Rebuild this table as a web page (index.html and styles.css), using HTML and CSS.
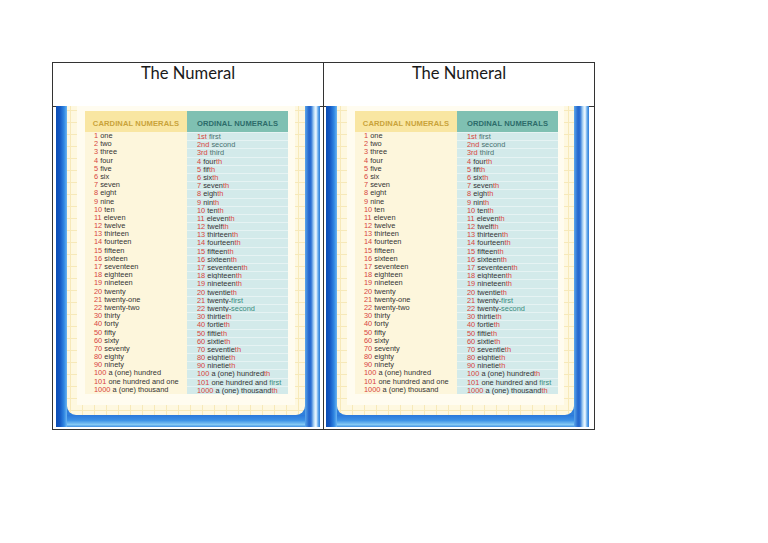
FILE: index.html
```html
<!DOCTYPE html>
<html>
<head>
<meta charset="utf-8">
<link rel="stylesheet" href="styles.css">
</head>
<body>
<div class="page">
  <div class="doc">
    <div class="head first">The Numeral</div>
    <div class="head">The Numeral</div>
    <div class="cell first pad3">
      <div class="pic">
        <div class="panel">
          <div class="card">
            <div class="nums">
              <div class="hc">CARDINAL NUMERALS</div><div class="ho">ORDINAL NUMERALS</div>
              <div class="c"><span class="n">1</span> one</div><div class="o"><span class="n">1st</span> <span class="t2">first</span></div>
              <div class="c"><span class="n">2</span> two</div><div class="o"><span class="n">2nd</span> <span class="t2">second</span></div>
              <div class="c"><span class="n">3</span> three</div><div class="o"><span class="n">3rd</span> <span class="t2">third</span></div>
              <div class="c"><span class="n">4</span> four</div><div class="o"><span class="n">4</span> four<span class="n">th</span></div>
              <div class="c"><span class="n">5</span> five</div><div class="o"><span class="n">5</span> fif<span class="n">th</span></div>
              <div class="c"><span class="n">6</span> six</div><div class="o"><span class="n">6</span> six<span class="n">th</span></div>
              <div class="c"><span class="n">7</span> seven</div><div class="o"><span class="n">7</span> seven<span class="n">th</span></div>
              <div class="c"><span class="n">8</span> eight</div><div class="o"><span class="n">8</span> eigh<span class="n">th</span></div>
              <div class="c"><span class="n">9</span> nine</div><div class="o"><span class="n">9</span> nin<span class="n">th</span></div>
              <div class="c"><span class="n">10</span> ten</div><div class="o"><span class="n">10</span> ten<span class="n">th</span></div>
              <div class="c"><span class="n">11</span> eleven</div><div class="o"><span class="n">11</span> eleven<span class="n">th</span></div>
              <div class="c"><span class="n">12</span> twelve</div><div class="o"><span class="n">12</span> twelf<span class="n">th</span></div>
              <div class="c"><span class="n">13</span> thirteen</div><div class="o"><span class="n">13</span> thirteen<span class="n">th</span></div>
              <div class="c"><span class="n">14</span> fourteen</div><div class="o"><span class="n">14</span> fourteen<span class="n">th</span></div>
              <div class="c"><span class="n">15</span> fifteen</div><div class="o"><span class="n">15</span> fifteen<span class="n">th</span></div>
              <div class="c"><span class="n">16</span> sixteen</div><div class="o"><span class="n">16</span> sixteen<span class="n">th</span></div>
              <div class="c"><span class="n">17</span> seventeen</div><div class="o"><span class="n">17</span> seventeen<span class="n">th</span></div>
              <div class="c"><span class="n">18</span> eighteen</div><div class="o"><span class="n">18</span> eighteen<span class="n">th</span></div>
              <div class="c"><span class="n">19</span> nineteen</div><div class="o"><span class="n">19</span> nineteen<span class="n">th</span></div>
              <div class="c"><span class="n">20</span> twenty</div><div class="o"><span class="n">20</span> twentie<span class="n">th</span></div>
              <div class="c"><span class="n">21</span> twenty-one</div><div class="o"><span class="n">21</span> twenty-<span class="t">first</span></div>
              <div class="c"><span class="n">22</span> twenty-two</div><div class="o"><span class="n">22</span> twenty-<span class="t">second</span></div>
              <div class="c"><span class="n">30</span> thirty</div><div class="o"><span class="n">30</span> thirtie<span class="n">th</span></div>
              <div class="c"><span class="n">40</span> forty</div><div class="o"><span class="n">40</span> fortie<span class="n">th</span></div>
              <div class="c"><span class="n">50</span> fifty</div><div class="o"><span class="n">50</span> fiftie<span class="n">th</span></div>
              <div class="c"><span class="n">60</span> sixty</div><div class="o"><span class="n">60</span> sixtie<span class="n">th</span></div>
              <div class="c"><span class="n">70</span> seventy</div><div class="o"><span class="n">70</span> seventie<span class="n">th</span></div>
              <div class="c"><span class="n">80</span> eighty</div><div class="o"><span class="n">80</span> eightie<span class="n">th</span></div>
              <div class="c"><span class="n">90</span> ninety</div><div class="o"><span class="n">90</span> ninetie<span class="n">th</span></div>
              <div class="c"><span class="n">100</span> a (one) hundred</div><div class="o"><span class="n">100</span> a (one) hundred<span class="n">th</span></div>
              <div class="c"><span class="n">101</span> one hundred and one</div><div class="o"><span class="n">101</span> one hundred and <span class="t">first</span></div>
              <div class="c"><span class="n">1000</span> a (one) thousand</div><div class="o"><span class="n">1000</span> a (one) thousand<span class="n">th</span></div>
            </div>
          </div>
        </div>
      </div>
    </div>
    <div class="cell pad2">
      <div class="pic pic2">
        <div class="panel">
          <div class="card">
            <div class="nums">
              <div class="hc">CARDINAL NUMERALS</div><div class="ho">ORDINAL NUMERALS</div>
              <div class="c"><span class="n">1</span> one</div><div class="o"><span class="n">1st</span> <span class="t2">first</span></div>
              <div class="c"><span class="n">2</span> two</div><div class="o"><span class="n">2nd</span> <span class="t2">second</span></div>
              <div class="c"><span class="n">3</span> three</div><div class="o"><span class="n">3rd</span> <span class="t2">third</span></div>
              <div class="c"><span class="n">4</span> four</div><div class="o"><span class="n">4</span> four<span class="n">th</span></div>
              <div class="c"><span class="n">5</span> five</div><div class="o"><span class="n">5</span> fif<span class="n">th</span></div>
              <div class="c"><span class="n">6</span> six</div><div class="o"><span class="n">6</span> six<span class="n">th</span></div>
              <div class="c"><span class="n">7</span> seven</div><div class="o"><span class="n">7</span> seven<span class="n">th</span></div>
              <div class="c"><span class="n">8</span> eight</div><div class="o"><span class="n">8</span> eigh<span class="n">th</span></div>
              <div class="c"><span class="n">9</span> nine</div><div class="o"><span class="n">9</span> nin<span class="n">th</span></div>
              <div class="c"><span class="n">10</span> ten</div><div class="o"><span class="n">10</span> ten<span class="n">th</span></div>
              <div class="c"><span class="n">11</span> eleven</div><div class="o"><span class="n">11</span> eleven<span class="n">th</span></div>
              <div class="c"><span class="n">12</span> twelve</div><div class="o"><span class="n">12</span> twelf<span class="n">th</span></div>
              <div class="c"><span class="n">13</span> thirteen</div><div class="o"><span class="n">13</span> thirteen<span class="n">th</span></div>
              <div class="c"><span class="n">14</span> fourteen</div><div class="o"><span class="n">14</span> fourteen<span class="n">th</span></div>
              <div class="c"><span class="n">15</span> fifteen</div><div class="o"><span class="n">15</span> fifteen<span class="n">th</span></div>
              <div class="c"><span class="n">16</span> sixteen</div><div class="o"><span class="n">16</span> sixteen<span class="n">th</span></div>
              <div class="c"><span class="n">17</span> seventeen</div><div class="o"><span class="n">17</span> seventeen<span class="n">th</span></div>
              <div class="c"><span class="n">18</span> eighteen</div><div class="o"><span class="n">18</span> eighteen<span class="n">th</span></div>
              <div class="c"><span class="n">19</span> nineteen</div><div class="o"><span class="n">19</span> nineteen<span class="n">th</span></div>
              <div class="c"><span class="n">20</span> twenty</div><div class="o"><span class="n">20</span> twentie<span class="n">th</span></div>
              <div class="c"><span class="n">21</span> twenty-one</div><div class="o"><span class="n">21</span> twenty-<span class="t">first</span></div>
              <div class="c"><span class="n">22</span> twenty-two</div><div class="o"><span class="n">22</span> twenty-<span class="t">second</span></div>
              <div class="c"><span class="n">30</span> thirty</div><div class="o"><span class="n">30</span> thirtie<span class="n">th</span></div>
              <div class="c"><span class="n">40</span> forty</div><div class="o"><span class="n">40</span> fortie<span class="n">th</span></div>
              <div class="c"><span class="n">50</span> fifty</div><div class="o"><span class="n">50</span> fiftie<span class="n">th</span></div>
              <div class="c"><span class="n">60</span> sixty</div><div class="o"><span class="n">60</span> sixtie<span class="n">th</span></div>
              <div class="c"><span class="n">70</span> seventy</div><div class="o"><span class="n">70</span> seventie<span class="n">th</span></div>
              <div class="c"><span class="n">80</span> eighty</div><div class="o"><span class="n">80</span> eightie<span class="n">th</span></div>
              <div class="c"><span class="n">90</span> ninety</div><div class="o"><span class="n">90</span> ninetie<span class="n">th</span></div>
              <div class="c"><span class="n">100</span> a (one) hundred</div><div class="o"><span class="n">100</span> a (one) hundred<span class="n">th</span></div>
              <div class="c"><span class="n">101</span> one hundred and one</div><div class="o"><span class="n">101</span> one hundred and <span class="t">first</span></div>
              <div class="c"><span class="n">1000</span> a (one) thousand</div><div class="o"><span class="n">1000</span> a (one) thousand<span class="n">th</span></div>
            </div>
          </div>
        </div>
      </div>
    </div>
  </div>
</div>
</body>
</html>
```
FILE: styles.css
```css
* { box-sizing: border-box; }
html, body { margin: 0; padding: 0; background: #fff; }
body { width: 768px; height: 543px; overflow: hidden; }

.page { padding: 62px 0 0 52px; }

.doc {
  display: grid;
  grid-template-columns: 271px 270px;
  grid-template-rows: 44px 322px;
  width: 543px;
  border: 1px solid #333;
}

.head {
  border-bottom: 1px solid #333;
  padding-top: 1px;
  font-family: Lato, "Liberation Sans", sans-serif;
  font-size: 16.6px;
  line-height: 19px;
  color: #1a1a1a;
  text-align: center;
}
.first { border-right: 1px solid #333; }

.cell { padding-top: 0; }
.pad3 { padding-left: 3px; }
.pad2 { padding-left: 2px; }

.pic {
  margin-top: -1px;
  width: 264px;
  height: 321px;
  padding: 0 15px 12px 11px;
  background:
    linear-gradient(to right, #0b4db4 0, #1459c4 4px, #2f86e2 8px, #6cb6f2 11px) left top / 11px 100% no-repeat,
    linear-gradient(to right, #5aa6ea 0, #2466cc 4px, #2a70d4 6px, #b6dcf6 9px, #f4faff 11px, #68aeec 13px, #2c7ad8 15px) right top / 15px 100% no-repeat,
    linear-gradient(to bottom, #2a78da 0, #3d92e6 45%, #86caf4 80%, #3e8ee2 100%) left bottom / 100% 12px no-repeat,
    #2f7fdc;
}
.pic2 { width: 263px; }

.panel {
  height: 309px;
  padding: 0 10px;
  border-radius: 0 0 9px 9px;
  background-color: #fef8e0;
  background-image:
    linear-gradient(to right, #f7e9b9 1px, transparent 1px),
    linear-gradient(to bottom, #f7e9b9 1px, transparent 1px);
  background-size: 12px 12px;
  background-position: 3px 4px;
}

.card {
  height: 299px;
  padding: 5px 7px 0 8px;
  background: #fffcf0;
}

.nums {
  display: grid;
  grid-template-columns: 102px 101px;
  grid-template-rows: 21px;
  grid-auto-rows: 8.2px;
  font-family: "Liberation Sans", Arial, sans-serif;
  font-size: 7.4px;
  line-height: 8.2px;
  color: #333;
  white-space: nowrap;
}

.hc, .ho {
  font-weight: bold;
  font-size: 7.6px;
  line-height: 17px;
  padding-top: 4px;
  text-align: center;
  letter-spacing: 0.1px;
}
.hc { background: #f9e6a2; color: #c9a33a; }
.ho { background: #7fc0b2; color: #2c6c6a; }

.c {
  background: #fdf6dc;
  padding-left: 9px;
}
.o {
  background: #d3eaea;
  padding-left: 10px;
  border-top: 1px solid #e6f3f3;
  line-height: 7.2px;
}

.n { color: #d8443d; }
.t { color: #3a8c7e; }
.t2 { color: #4a7270; }
```
